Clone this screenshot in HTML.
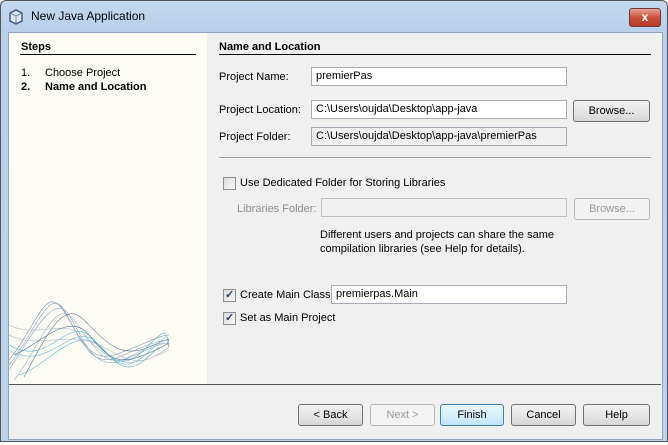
<!DOCTYPE html>
<html><head><style>
body{margin:0;width:668px;height:445px;overflow:hidden;background:#fff;font-family:"Liberation Sans",sans-serif;font-size:11px;color:#000;position:relative}
.a{position:absolute}
.frame{left:0;top:0;width:666px;height:440px;background:linear-gradient(#c4d8ee,#b8d0ea 30px,#bcd3eb);border:1px solid #555;border-radius:6px 6px 0 0}
.content{left:8px;top:32px;width:653px;height:406px;background:#f0f0f0;border:1px solid #8ea4bf}
.left{left:9px;top:33px;width:198px;height:351px;background:#fcfcf4}
.tf{background:#fff;border:1px solid #a5acb5;height:19px;box-sizing:border-box;padding:2px 4px;line-height:13px}
.tf.dis{background:#f0f0f0}
.btn{height:22px;box-sizing:border-box;border:1px solid #707070;border-radius:3px;background:linear-gradient(#f2f2f2,#e6e6e6 50%,#d6d6d6);text-align:center;line-height:20px}
.cb{width:11px;height:11px;border:1px solid #8f8f8f;background:linear-gradient(135deg,#dcdcdc,#fafafa)}
.cb.on::after{content:"✓";position:absolute;left:1px;top:-2px;font-size:11px;font-weight:bold;color:#2a3f7a}
</style></head><body>
<div class="a frame"></div>
<svg class="a" style="left:8px;top:9px" width="16" height="16" viewBox="0 0 16 16"><path d="M8 1L14 4V12L8 15L2 12V4Z" fill="#dfe9f5" stroke="#2c4a7a" stroke-width="1.3"/><path d="M2 4L8 7L14 4M8 7V15" fill="none" stroke="#6a86b0" stroke-width="1"/></svg>
<div class="a" style="left:31px;top:9px;font-size:12px;color:#000">New Java Application</div>
<div class="a" style="left:629px;top:8px;width:30px;height:17px;border:1px solid #6d3a35;border-radius:3px;background:linear-gradient(#e8a497,#c8503c 50%,#b83a25);color:#fff;text-align:center;font-weight:bold;font-size:12px;line-height:16px">x</div>
<div class="a content"></div>
<div class="a left"></div>
<svg class="a" style="left:9px;top:285px" width="198" height="99" viewBox="0 0 198 99">
<g fill="none" stroke-width="0.6">
<path d="M0 75C25 45 35 5 50 20S75 80 105 70S150 50 160 50" stroke="#7d8fb0"/>
<path d="M0 80C25 50 40 0 55 25S80 85 110 72S150 55 160 55" stroke="#8fa0bd"/>
<path d="M0 85C20 55 45 5 60 30S85 88 115 75S150 58 160 58" stroke="#7fa8c8"/>
<path d="M5 95C30 65 45 10 65 35S95 85 120 72S155 55 160 60" stroke="#9eb4cc"/>
<path d="M0 60C40 85 60 25 85 55S120 80 140 60S155 50 160 55" stroke="#5cb8d4"/>
<path d="M0 65C40 90 65 30 90 60S125 80 145 62S155 55 160 58" stroke="#6cc4dc"/>
<path d="M10 90C40 80 70 35 95 65S130 80 150 62" stroke="#4fb0d0"/>
<path d="M0 50C30 65 60 45 90 60S130 85 160 62" stroke="#aab8cc"/>
<path d="M15 92C40 45 55 15 75 35S110 75 140 62S155 55 160 62" stroke="#667a9e"/>
<path d="M0 40C30 55 55 30 80 55S120 85 160 65" stroke="#b0bccc"/>
<path d="M5 70C30 60 60 25 80 50S110 80 135 70S155 60 160 58" stroke="#5a6e96"/>
</g></svg>
<div class="a" style="left:21px;top:41px;font-weight:bold">Steps</div>
<div class="a" style="left:20px;top:54px;width:176px;border-top:1px solid #000"></div>
<div class="a" style="left:21px;top:67px">1.</div><div class="a" style="left:45px;top:67px">Choose Project</div>
<div class="a" style="left:21px;top:81px;font-weight:bold">2.</div><div class="a" style="left:45px;top:81px;font-weight:bold">Name and Location</div>
<div class="a" style="left:219px;top:41px;font-weight:bold">Name and Location</div>
<div class="a" style="left:219px;top:54px;width:432px;border-top:1px solid #000"></div>
<div class="a" style="left:219px;top:71px">Project Name:</div>
<div class="a tf" style="left:311px;top:67px;width:256px">premierPas</div>
<div class="a" style="left:219px;top:104px">Project Location:</div>
<div class="a tf" style="left:311px;top:100px;width:256px">C:\Users\oujda\Desktop\app-java</div>
<div class="a btn" style="left:573px;top:100px;width:77px">Browse...</div>
<div class="a" style="left:219px;top:131px">Project Folder:</div>
<div class="a tf dis" style="left:311px;top:127px;width:256px">C:\Users\oujda\Desktop\app-java\premierPas</div>
<div class="a" style="left:219px;top:157px;width:432px;border-top:1px solid #a0a0a0"></div>
<div class="a cb" style="left:223px;top:177px"></div>
<div class="a" style="left:240px;top:177px">Use Dedicated Folder for Storing Libraries</div>
<div class="a" style="left:237px;top:203px;color:#8d8d8d">Libraries Folder:</div>
<div class="a tf dis" style="left:321px;top:198px;width:246px;border-color:#c0c0c0"></div>
<div class="a btn" style="left:574px;top:198px;width:76px;color:#9a9a9a;border-color:#b8b8b8;background:#f2f2f2">Browse...</div>
<div class="a" style="left:320px;top:228px;line-height:14px">Different users and projects can share the same<br>compilation libraries (see Help for details).</div>
<div class="a cb on" style="left:223px;top:289px"></div>
<div class="a" style="left:240px;top:289px">Create Main Class</div>
<div class="a tf" style="left:331px;top:285px;width:236px">premierpas.Main</div>
<div class="a cb on" style="left:223px;top:312px"></div>
<div class="a" style="left:240px;top:312px">Set as Main Project</div>
<div class="a" style="left:9px;top:384px;width:652px;border-top:1px solid #555"></div>
<div class="a btn" style="left:298px;top:404px;width:65px">&lt; Back</div>
<div class="a btn" style="left:370px;top:404px;width:65px;color:#9a9a9a;border-color:#b8b8b8;background:#f3f3f3">Next &gt;</div>
<div class="a btn" style="left:440px;top:404px;width:64px;border-color:#3c7fb1;background:linear-gradient(#eaf6fd,#d9f0fc 50%,#bee6fd)">Finish</div>
<div class="a btn" style="left:511px;top:404px;width:65px">Cancel</div>
<div class="a btn" style="left:583px;top:404px;width:67px">Help</div>
</body></html>
